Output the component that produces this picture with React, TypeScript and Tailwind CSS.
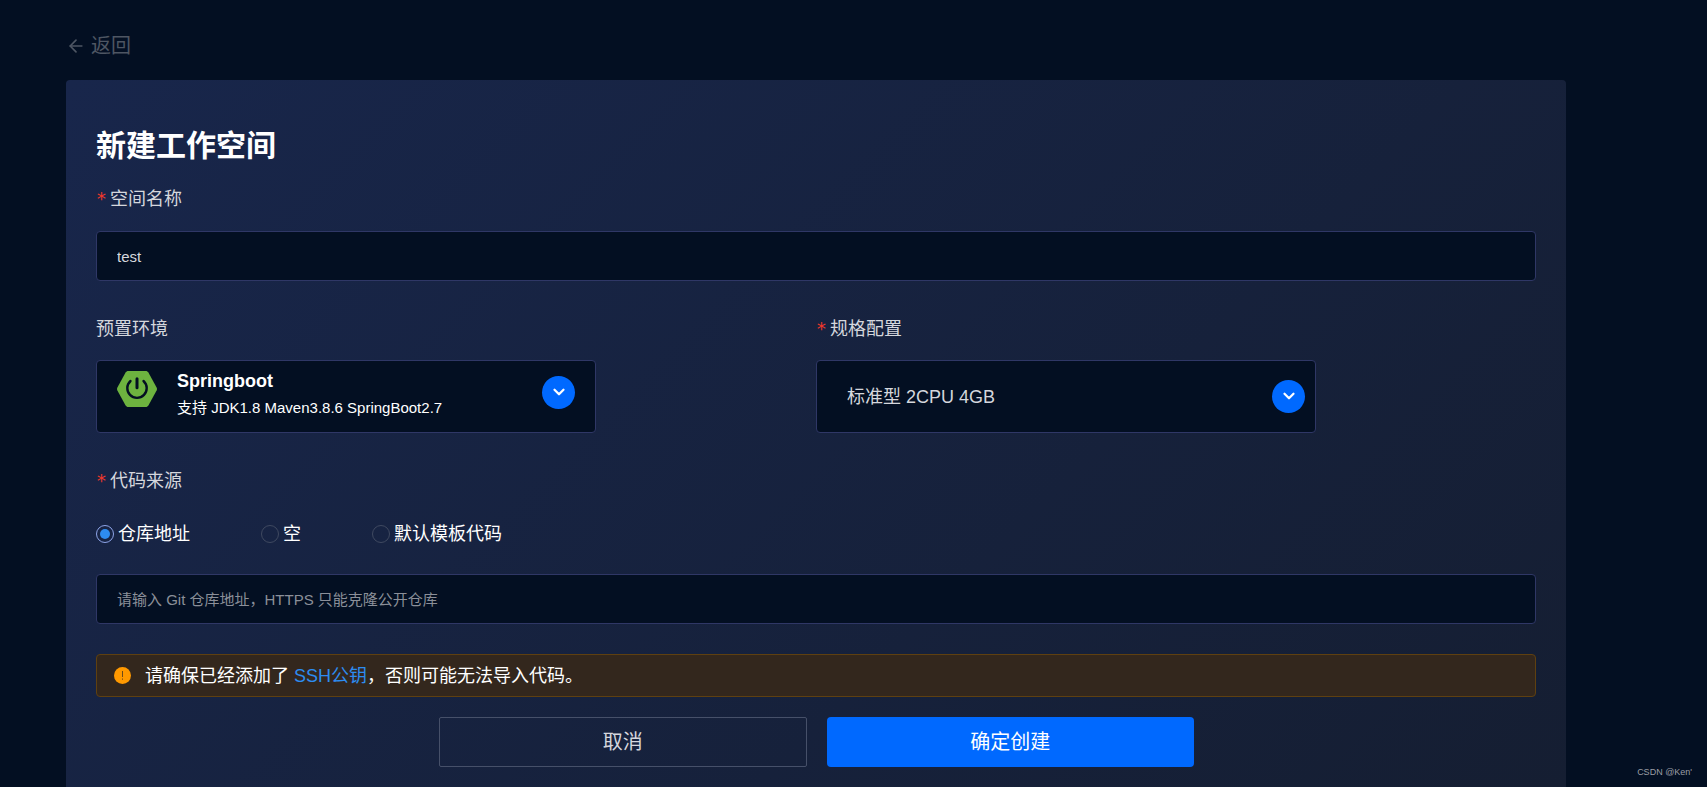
import React, { useState } from 'react';
import { ArrowLeft, ChevronDown } from 'lucide-react';

type CodeSource = 'repo' | 'empty' | 'template';

const codeSources: { value: CodeSource; label: string }[] = [
  { value: 'repo', label: '仓库地址' },
  { value: 'empty', label: '空' },
  { value: 'template', label: '默认模板代码' },
];

const inputClass =
  'block w-full h-[50px] px-5 rounded border border-[#2f3766] bg-[#030f22] text-[15px] text-[#d5d7dd] placeholder:text-[#8b8f99] outline-none focus:border-[#0069ff]';

const RequiredMark = () => (
  <span aria-hidden="true" className="w-[14px] text-lg leading-5 text-[#f0382b] font-['DejaVu_Sans_Mono',monospace]">
    *
  </span>
);

const DropIcon = () => (
  <span className="flex size-[33px] shrink-0 items-center justify-center rounded-full bg-[#0069ff] pb-0.5 text-white pointer-events-none">
    <ChevronDown className="size-[18px]" strokeWidth={3} />
  </span>
);

const SpringLogo = () => (
  <svg viewBox="0 0 40 36" className="h-9 w-10 shrink-0" aria-hidden="true">
    <path
      d="M11.2 0h17.6c1.1 0 2 .6 2.6 1.5l8.2 14.9c.5 1 .5 2.2 0 3.2l-8.2 14.9c-.6.9-1.5 1.5-2.6 1.5H11.2c-1.1 0-2-.6-2.6-1.5L.4 19.6c-.5-1-.5-2.2 0-3.2L8.6 1.5C9.2.6 10.1 0 11.2 0z"
      fill="#6db33f"
    />
    <path d="M13.5 10a9.7 9.7 0 1 0 13 0" fill="none" stroke="#030f22" strokeWidth="2.4" strokeLinecap="round" />
    <path d="M20 7.800v9" fill="none" stroke="#030f22" strokeWidth="3" strokeLinecap="round" />
  </svg>
);

export default function App() {
  const [name, setName] = useState('test');
  const [source, setSource] = useState<CodeSource>('repo');
  const [repoUrl, setRepoUrl] = useState('');

  return (
    <div className="relative flex min-h-screen flex-col bg-[#030f22] pl-[66px] pr-[141px] font-['Liberation_Sans','Noto_Sans_CJK_SC',sans-serif] text-white">
      <header className="flex h-20 items-start pt-[31px]">
        <button type="button" className="flex items-center gap-[5px] text-xl leading-[30px] text-[#4e5663]">
          <ArrowLeft className="size-5" strokeWidth={2} />
          返回
        </button>
      </header>

      <main className="flex-1 rounded-t bg-linear-135 from-[#18264b] to-[#151e32] px-[30px] pt-[46px] pb-5">
        <form onSubmit={(e) => e.preventDefault()}>
          <h1 className="text-[30px] leading-10 font-bold">新建工作空间</h1>

          <label htmlFor="space-name" className="mt-[21px] flex items-center text-lg leading-6 text-[#d5d7dd]">
            <RequiredMark />
            空间名称
          </label>
          <input
            id="space-name"
            required
            className={`${inputClass} mt-5`}
            value={name}
            onChange={(e) => setName(e.target.value)}
          />

          <div className="mt-9 grid grid-cols-2">
            <div>
              <label htmlFor="preset-env" className="flex items-center text-lg leading-6 text-[#d5d7dd]">
                预置环境
              </label>
              <div className="mt-[19px] flex h-[73px] max-w-[500px] items-start rounded border border-[#2f3766] bg-[#030f22] px-5 pt-2">
                <div className="pt-0.5">
                  <SpringLogo />
                </div>
                <div className="ml-5 flex-1">
                  <select
                    id="preset-env"
                    className="block w-full appearance-none bg-transparent text-lg leading-6 font-bold outline-none"
                  >
                    <option>Springboot</option>
                  </select>
                  <p className="mt-1 text-[15px] leading-[22px]">支持 JDK1.8 Maven3.8.6 SpringBoot2.7</p>
                </div>
                <div className="pt-[7px]">
                  <DropIcon />
                </div>
              </div>
            </div>

            <div>
              <label htmlFor="spec" className="flex items-center text-lg leading-6 text-[#d5d7dd]">
                <RequiredMark />
                规格配置
              </label>
              <div className="mt-[19px] flex h-[73px] max-w-[500px] items-center rounded border border-[#2f3766] bg-[#030f22] pr-[10px] pl-[30px]">
                <select
                  id="spec"
                  className="block h-full flex-1 appearance-none bg-transparent text-lg text-[#d5d7dd] outline-none"
                >
                  <option>标准型 2CPU 4GB</option>
                </select>
                <DropIcon />
              </div>
            </div>
          </div>

          <fieldset className="mt-9">
            <legend className="flex items-center text-lg leading-6 text-[#d5d7dd]">
              <RequiredMark />
              代码来源
            </legend>
            <div className="mt-[29px] flex gap-[71px]">
              {codeSources.map((item) => (
                <label key={item.value} className="flex items-center gap-1 text-lg leading-6">
                  <input
                    type="radio"
                    name="code-source"
                    className="grid size-[18px] appearance-none place-content-center rounded-full border border-[#3f4960] before:size-[10px] before:rounded-full checked:border-[#8ea4e8] checked:before:bg-[#2d8cf0]"
                    checked={source === item.value}
                    onChange={() => setSource(item.value)}
                  />
                  {item.label}
                </label>
              ))}
            </div>
          </fieldset>

          <input
            aria-label="Git 仓库地址"
            className={`${inputClass} mt-7`}
            placeholder="请输入 Git 仓库地址，HTTPS 只能克隆公开仓库"
            value={repoUrl}
            onChange={(e) => setRepoUrl(e.target.value)}
          />

          <div className="mt-[30px] flex h-[43px] items-center rounded border border-[#5f4010] bg-[#33271d] px-[17px] text-lg leading-6">
            <svg viewBox="0 0 17 17" className="mr-[14px] size-[17px] shrink-0" aria-hidden="true">
              <circle cx="8.5" cy="8.5" r="8.5" fill="#ff9900" />
              <path d="M8.5 4v6M8.5 11.5v1.2" stroke="#6b4a1c" strokeWidth="1" />
            </svg>
            <p>
              请确保已经添加了{' '}
              <a href="#ssh" className="text-[#2d8cf0]">SSH公钥</a>
              ，否则可能无法导入代码。
            </p>
          </div>

          <div className="mx-auto mt-5 flex max-w-[755px] gap-5 text-xl">
            <button type="button" className="h-[50px] flex-1 rounded-xs border border-[#465069] text-[#d5d7dd]">
              取消
            </button>
            <button type="submit" className="h-[50px] flex-1 rounded bg-[#0069ff]">
              确定创建
            </button>
          </div>
        </form>
      </main>

      <span className="absolute right-[15px] bottom-2 text-[9px] leading-[14px] text-[#9b9ea6]">CSDN @Ken'</span>
    </div>
  );
}
